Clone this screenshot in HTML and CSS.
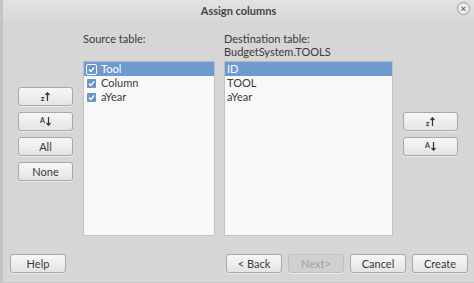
FILE: index.html
```html
<!DOCTYPE html>
<html lang="en">
<head>
    <meta charset="UTF-8">
    <meta name="viewport" content="width=device-width, initial-scale=1.0">
    <title>Assign columns</title>
    <link rel="stylesheet" href="styles.css">
</head>
<body>
<div class="window">
    <div class="titlebar">
        <span class="title">Assign columns</span>
        <span class="close">&times;</span>
    </div>

    <div class="content">
        <div class="cols">
            <div></div>
            <div class="label">Source table:</div>
            <div class="label">Destination table:<br>BudgetSystem.TOOLS</div>
            <div></div>

            <div class="side left-side">
                <button class="btn"><span class="sort">z</span><svg class="arrow" width="5" height="9" viewBox="0 0 5 9"><path d="M2.5 1v8M0.5 3l2-2.2 2 2.2" fill="none" stroke="#333" stroke-width="1.2"/></svg></button>
                <button class="btn"><span class="sort up">A</span><svg class="arrow" width="5" height="9" viewBox="0 0 5 9"><path d="M2.5 0v8M0.5 6l2 2.2 2-2.2" fill="none" stroke="#333" stroke-width="1.2"/></svg></button>
                <button class="btn">All</button>
                <button class="btn">None</button>
            </div>

            <div class="list source">
                <div class="row selected"><span class="check">
                    <svg width="9" height="9" viewBox="0 0 9 9"><path d="M2 4.5l1.8 2 3.4-4" fill="none" stroke="#fff" stroke-width="1.3"/></svg>
                </span>Tool</div>
                <div class="row"><span class="check">
                    <svg width="9" height="9" viewBox="0 0 9 9"><path d="M2 4.5l1.8 2 3.4-4" fill="none" stroke="#fff" stroke-width="1.3"/></svg>
                </span>Column</div>
                <div class="row"><span class="check">
                    <svg width="9" height="9" viewBox="0 0 9 9"><path d="M2 4.5l1.8 2 3.4-4" fill="none" stroke="#fff" stroke-width="1.3"/></svg>
                </span>aYear</div>
            </div>

            <div class="list dest">
                <div class="row selected plain">ID</div>
                <div class="row plain">TOOL</div>
                <div class="row plain">aYear</div>
            </div>

            <div class="side right-side">
                <button class="btn"><span class="sort">z</span><svg class="arrow" width="5" height="9" viewBox="0 0 5 9"><path d="M2.5 1v8M0.5 3l2-2.2 2 2.2" fill="none" stroke="#333" stroke-width="1.2"/></svg></button>
                <button class="btn"><span class="sort up">A</span><svg class="arrow" width="5" height="9" viewBox="0 0 5 9"><path d="M2.5 0v8M0.5 6l2 2.2 2-2.2" fill="none" stroke="#333" stroke-width="1.2"/></svg></button>
            </div>
        </div>

        <div class="footer">
            <button class="btn">Help</button>
            <div class="nav">
                <button class="btn">&lt; Back</button>
                <button class="btn" disabled>Next&gt;</button>
                <button class="btn">Cancel</button>
                <button class="btn">Create</button>
            </div>
        </div>
    </div>
</div>
</body>
</html>
```

FILE: styles.css
```css
body {
    margin: 0;
    font-family: Lato, "Open Sans", sans-serif;
    font-size: 11px;
    color: #3a3a3a;
}

.window {
    width: 474px;
    height: 283px;
    box-sizing: border-box;
    background: #d6d6d6;
    border-left: 3px solid #c4c4c4;
    border-bottom: 1px solid #c8c8c8;
    overflow: hidden;
}

.titlebar {
    height: 20px;
    display: flex;
    align-items: center;
    justify-content: center;
    position: relative;
    background: linear-gradient(#e2e2e2, #d9d9d9);
}

.title {
    font-weight: bold;
    font-size: 11px;
    color: #444;
}

.close {
    position: absolute;
    right: 4px;
    top: 2px;
    width: 11px;
    height: 11px;
    border: 1px solid #9a9a9a;
    border-radius: 50%;
    background: #ececec;
    font-size: 10px;
    line-height: 10px;
    text-align: center;
    color: #444;
}

.content {
    padding: 13px 0 0 15px;
}

.cols {
    display: grid;
    grid-template-columns: 65px 141px 179px 55px;
    grid-template-rows: 28px 175px;
}

.label {
    line-height: 13px;
    margin-top: -1px;
}

.list {
    background: #f8f8f8;
    border: 1px solid #c2c2c2;
    border-top-color: #b8b8b8;
    box-sizing: border-box;
}

.list.source {
    width: 132px;
}

.list.dest {
    width: 169px;
}

.row {
    height: 14px;
    line-height: 14px;
    display: flex;
    align-items: center;
    padding-left: 3px;
    white-space: nowrap;
}

.row.plain {
    padding-left: 2px;
}

.row.selected {
    background: #6f9ad0;
    color: #fff;
}

.check {
    width: 9px;
    height: 9px;
    margin-right: 5px;
    background: #6a95c8;
    border-radius: 1px;
    display: flex;
}

.selected .check {
    outline: 1px solid #fff;
}

.side {
    display: flex;
    flex-direction: column;
    gap: 6px;
}

.left-side {
    padding-top: 26px;
}

.right-side {
    padding-top: 51px;
}

.btn {
    height: 19px;
    width: 55px;
    padding: 0;
    font-family: inherit;
    font-size: 11px;
    color: #3a3a3a;
    border: 1px solid #a8a8a8;
    border-radius: 3px;
    background: linear-gradient(#f7f7f7, #e4e4e4);
    box-shadow: 0 1px 0 rgba(255, 255, 255, 0.5);
    display: flex;
    align-items: center;
    justify-content: center;
}

.btn:disabled {
    background: #d0d0d0;
    border-color: #c0c0c0;
    color: #a2a2a2;
}

.sort {
    font-weight: bold;
    font-size: 8px;
    margin-right: 1px;
    line-height: 8px;
    padding-top: 2px;
}

.sort.up {
    font-size: 7px;
    padding-top: 0;
    margin-bottom: 4px;
}

.footer {
    display: flex;
    justify-content: space-between;
    margin-top: 18px;
    padding-right: 6px;
    margin-left: -8px;
}

.footer .btn {
    width: 56px;
}

.nav {
    display: flex;
    gap: 6px;
}
```
